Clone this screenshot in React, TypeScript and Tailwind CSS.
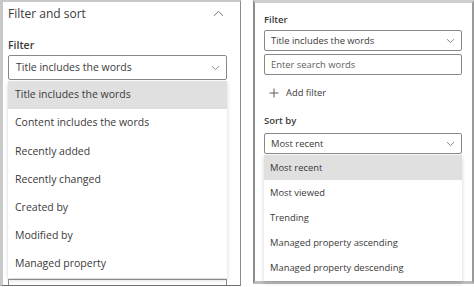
import React from "react";

const font = { fontFamily: '"Open Sans", "Noto Sans", sans-serif' };

function ChevronDown({ className = "" }: { className?: string }) {
  return (
    <svg className={className} width="9" height="6" viewBox="0 0 9 6" fill="none">
      <path d="M1 1.2 L4.5 4.6 L8 1.2" stroke="#8a8886" strokeWidth="1" />
    </svg>
  );
}

function ChevronUp({ className = "" }: { className?: string }) {
  return (
    <svg className={className} width="11" height="7" viewBox="0 0 11 7" fill="none">
      <path d="M1 5.8 L5.5 1.4 L10 5.8" stroke="#7a7876" strokeWidth="1" />
    </svg>
  );
}

const leftItems = [
  "Title includes the words",
  "Content includes the words",
  "Recently added",
  "Recently changed",
  "Created by",
  "Modified by",
  "Managed property",
];

const rightItems = [
  "Most recent",
  "Most viewed",
  "Trending",
  "Managed property ascending",
  "Managed property descending",
];

export default function App() {
  return (
    <div className="w-[474px] h-[287px] bg-white flex overflow-hidden text-[#3b3a39]" style={font}>
      {/* Left panel */}
      <div className="w-[241px] h-[286px] shrink-0 border-t-2 border-l-[3px] border-r border-b border-t-[#c8c8c8] border-l-[#c8c8c8] border-r-[#8c8c8c] border-b-[#6e6e6e] flex flex-col pl-[5px] pr-[13px]">
        <div className="h-[23px] flex items-center justify-between">
          <span className="text-[12px] leading-none mt-[1px]">Filter and sort</span>
          <ChevronUp className="mr-[3px]" />
        </div>
        <div className="h-[29px] flex items-end pb-[4px]">
          <span className="text-[10.5px] font-semibold leading-none">Filter</span>
        </div>
        <div className="h-[25px] mt-[1px] border border-[#8a8886] rounded-[2px] flex items-center justify-between pl-[7px] pr-[6px]">
          <span className="text-[10.5px] leading-none">Title includes the words</span>
          <ChevronDown />
        </div>
        <div className="mt-[1px] bg-white shadow-[0_2px_4px_rgba(0,0,0,0.18)] flex flex-col">
          {leftItems.map((t, i) => (
            <div
              key={t}
              className={`h-[28.2px] flex items-center pl-[7px] text-[10.5px] ${i === 0 ? "bg-[#e0e0e0]" : ""}`}
            >
              {t}
            </div>
          ))}
        </div>
        <div className="mt-[1px] flex-1 border-t border-l border-r border-[#8a8886]" />
      </div>

      {/* gap */}
      <div className="w-[12px] shrink-0" />

      {/* Right panel */}
      <div className="flex-1 h-[284px] border-t-[3px] border-l-2 border-r-2 border-b-[3px] border-t-[#cfcfcf] border-l-[#8c8c8c] border-r-[#9a9a9a] border-b-[#bdbdbd] flex flex-col pl-[9px] pr-[10px]">
        <div className="h-[25px] flex items-end pb-[3px]">
          <span className="text-[9.5px] font-semibold leading-none">Filter</span>
        </div>
        <div className="h-[22px] mt-[3px] border border-[#8a8886] rounded-[2px] flex items-center justify-between pl-[6px] pr-[6px]">
          <span className="text-[9.4px] leading-none">Title includes the words</span>
          <ChevronDown />
        </div>
        <div className="h-[22px] mt-[3px] border border-[#8a8886] rounded-[2px] flex items-center pl-[6px]">
          <span className="text-[9.4px] leading-none text-[#605e5c]">Enter search words</span>
        </div>
        <div className="h-[34px] pt-[2px] flex items-center pl-[5px] gap-[7px]">
          <svg width="10" height="10" viewBox="0 0 10 10" fill="none">
            <path d="M5 0.5 V9.5 M0.5 5 H9.5" stroke="#605e5c" strokeWidth="1" />
          </svg>
          <span className="text-[9.4px] leading-none">Add filter</span>
        </div>
        <div className="h-[22px] flex items-end pb-[3px]">
          <span className="text-[9.5px] font-semibold leading-none">Sort by</span>
        </div>
        <div className="h-[22px] mt-[4px] border border-[#8a8886] rounded-[2px] flex items-center justify-between pl-[6px] pr-[6px]">
          <span className="text-[9.4px] leading-none">Most recent</span>
          <ChevronDown />
        </div>
        <div className="mt-[1px] bg-white shadow-[0_2px_4px_rgba(0,0,0,0.18)] flex flex-col">
          {rightItems.map((t, i) => (
            <div
              key={t}
              className={`h-[25.2px] flex items-center pl-[6px] text-[9.4px] ${i === 0 ? "bg-[#e0e0e0]" : ""}`}
            >
              {t}
            </div>
          ))}
        </div>
      </div>
    </div>
  );
}
